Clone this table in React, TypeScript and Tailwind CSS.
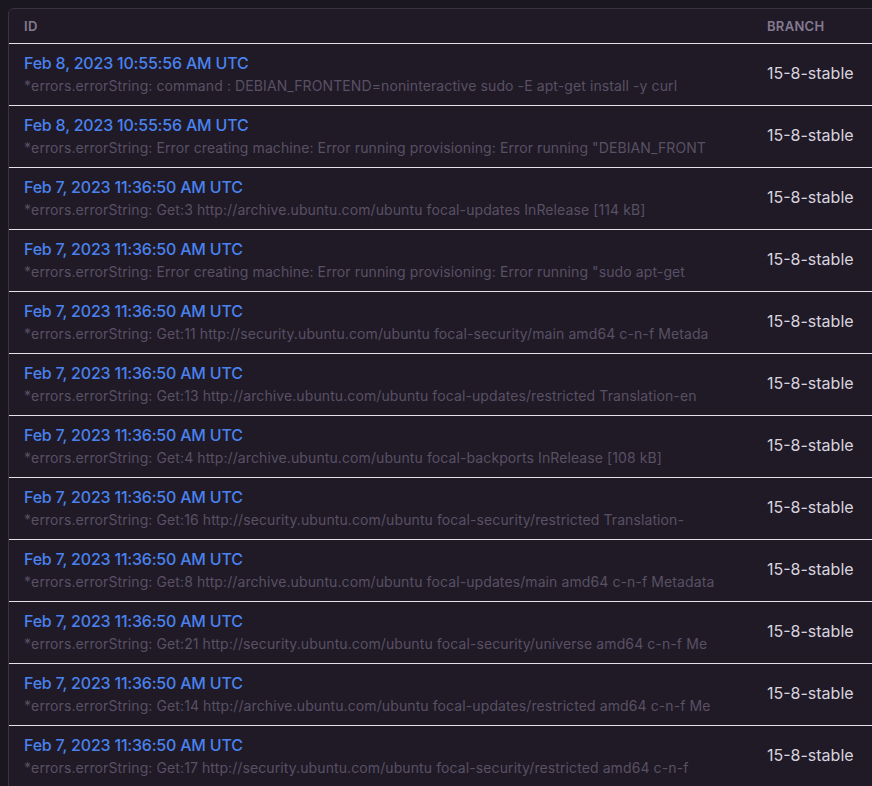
const rows = [
  {
    ts: "Feb 8, 2023 10:55:56 AM UTC",
    msg: "*errors.errorString: command : DEBIAN_FRONTEND=noninteractive sudo -E apt-get install -y curl",
  },
  {
    ts: "Feb 8, 2023 10:55:56 AM UTC",
    msg: '*errors.errorString: Error creating machine: Error running provisioning: Error running "DEBIAN_FRONT',
  },
  {
    ts: "Feb 7, 2023 11:36:50 AM UTC",
    msg: "*errors.errorString: Get:3 http://archive.ubuntu.com/ubuntu focal-updates InRelease [114 kB]",
  },
  {
    ts: "Feb 7, 2023 11:36:50 AM UTC",
    msg: '*errors.errorString: Error creating machine: Error running provisioning: Error running "sudo apt-get',
  },
  {
    ts: "Feb 7, 2023 11:36:50 AM UTC",
    msg: "*errors.errorString: Get:11 http://security.ubuntu.com/ubuntu focal-security/main amd64 c-n-f Metada",
  },
  {
    ts: "Feb 7, 2023 11:36:50 AM UTC",
    msg: "*errors.errorString: Get:13 http://archive.ubuntu.com/ubuntu focal-updates/restricted Translation-en",
  },
  {
    ts: "Feb 7, 2023 11:36:50 AM UTC",
    msg: "*errors.errorString: Get:4 http://archive.ubuntu.com/ubuntu focal-backports InRelease [108 kB]",
  },
  {
    ts: "Feb 7, 2023 11:36:50 AM UTC",
    msg: "*errors.errorString: Get:16 http://security.ubuntu.com/ubuntu focal-security/restricted Translation-",
  },
  {
    ts: "Feb 7, 2023 11:36:50 AM UTC",
    msg: "*errors.errorString: Get:8 http://archive.ubuntu.com/ubuntu focal-updates/main amd64 c-n-f Metadata",
  },
  {
    ts: "Feb 7, 2023 11:36:50 AM UTC",
    msg: "*errors.errorString: Get:21 http://security.ubuntu.com/ubuntu focal-security/universe amd64 c-n-f Me",
  },
  {
    ts: "Feb 7, 2023 11:36:50 AM UTC",
    msg: "*errors.errorString: Get:14 http://archive.ubuntu.com/ubuntu focal-updates/restricted amd64 c-n-f Me",
  },
  {
    ts: "Feb 7, 2023 11:36:50 AM UTC",
    msg: "*errors.errorString: Get:17 http://security.ubuntu.com/ubuntu focal-security/restricted amd64 c-n-f",
  },
];

const App = () => {
  return (
    <div
      className="h-[786px] w-[872px] overflow-hidden bg-[#1b1720] pl-2 pt-2"
      style={{ fontFamily: "Inter, 'Noto Sans', sans-serif" }}
    >
      <div className="w-[900px] rounded-tl-md border border-[#3a3241] bg-[#1f1a26]">
        {/* header */}
        <div className="grid h-[35px] grid-cols-[742px_1fr] items-center border-b border-[#e6e2ea] text-[13px] font-semibold uppercase tracking-[0.3px] text-[#857a91]">
          <div className="pl-[15px] pt-[2px]">ID</div>
          <div className="pl-4 pt-[2px]">Branch</div>
        </div>
        {rows.map((row, i) => (
          <div
            key={i}
            className="grid h-[62px] grid-cols-[742px_1fr] items-start border-b border-[#e6e2ea]"
          >
            <div className="flex flex-col pl-[15px] pt-[9px]">
              <span className="text-base leading-5 font-medium tracking-[-0.2px] text-[#4a82ef]">
                {row.ts}
              </span>
              <span className="mt-1 whitespace-nowrap text-sm leading-[18px] tracking-[0.1px] text-[#5a5064]">
                {row.msg}
              </span>
            </div>
            <div className="pl-4 pt-[17px] text-base leading-6 text-[#d9d3df]">
              15-8-stable
            </div>
          </div>
        ))}
      </div>
    </div>
  );
};

export default App;
